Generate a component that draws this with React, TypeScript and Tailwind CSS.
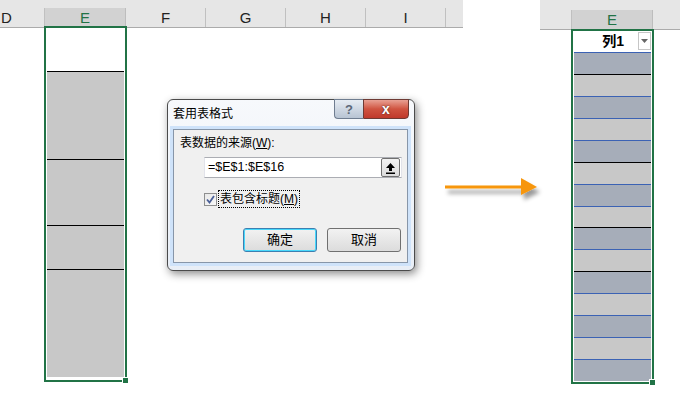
const leftCols = ["F", "G", "H", "I"];

// 左表：单元格高度（含上边框）
const leftCells = [
  { h: "h-[43px]", fill: "bg-white", line: "" },
  { h: "h-[88px]", fill: "bg-[#c8c8c8]", line: "border-t border-black" },
  { h: "h-[66px]", fill: "bg-[#c8c8c8]", line: "border-t border-black" },
  { h: "h-[44px]", fill: "bg-[#c8c8c8]", line: "border-t border-black" },
  { h: "h-[108px]", fill: "bg-[#c8c8c8]", line: "border-t border-black" },
];

const blackRows = [1, 5, 8, 10];

function FillHandle() {
  return (
    <div className="absolute -right-[4px] -bottom-[4px] w-[7px] h-[7px] bg-[#217346] border border-white" />
  );
}

function LeftSheet() {
  return (
    <div className="w-[463px] flex flex-col shrink-0">
      {/* 列标题 */}
      <div className="h-[28px] bg-[#e6e6e6] flex flex-col">
        <div className="h-[8px]" />
        <div className="h-[20px] flex border-b border-[#ababab] text-[15px] text-[#222] leading-[19px]">
          <div className="w-[45px] pl-[1px] border-r border-[#c0c0c0]">D</div>
          <div className="w-[81px] bg-[#d2d2d2] text-center text-[#217346] border-r border-[#bdbdbd]">E</div>
          {leftCols.map((c) => (
            <div key={c} className="w-[80px] text-center border-r border-[#c0c0c0]">
              {c}
            </div>
          ))}
          <div className="flex-1" />
        </div>
      </div>

      {/* 选中列 */}
      <div className="pl-[44px] -mt-[2px]">
        <div className="relative w-[83px] h-[356px] border-2 border-[#217346] px-[1px] pb-[1px] flex flex-col">
          {leftCells.map((c, i) => (
            <div key={i} className={`${c.h} ${c.fill} ${c.line} box-border`} />
          ))}
          <FillHandle />
        </div>
      </div>
    </div>
  );
}

function RightSheet() {
  const rows = Array.from({ length: 15 }, (_, i) => i);
  return (
    <div className="w-[140px] ml-[77px] flex flex-col shrink-0">
      <div className="h-[30px] bg-[#e6e6e6] flex flex-col">
        <div className="h-[10px]" />
        <div className="h-[20px] flex border-b border-[#ababab] text-[15px] leading-[19px]">
          <div className="w-[32px] border-r border-[#c0c0c0]" />
          <div className="w-[81px] bg-[#d2d2d2] text-center text-[#217346] border-r border-[#bdbdbd]">E</div>
          <div className="flex-1" />
        </div>
      </div>

      <div className="pl-[31px] -mt-[1px]">
        <div className="relative w-[83px] h-[355px] border-2 border-[#217346] px-[1px] pb-[1px] flex flex-col bg-white">
          <div className="h-[21px] flex items-center justify-end gap-[14px]">
            <span className="text-[14px] font-bold text-black leading-none">列1</span>
            <div className="w-[13px] h-[18px] border border-[#c6c6c6] bg-white flex items-center justify-center">
              <svg width="7" height="4" viewBox="0 0 7 4">
                <path d="M0 0 L7 0 L3.5 4 Z" fill="#666" />
              </svg>
            </div>
          </div>
          {rows.map((i) => (
            <div
              key={i}
              className={`h-[22px] last:h-[21px] box-border border-t ${
                blackRows.includes(i) ? "border-black" : "border-[#3b62b4]"
              } ${i % 2 === 0 ? "bg-[#a6adb9]" : "bg-[#c8c8c8]"}`}
            />
          ))}
          <FillHandle />
        </div>
      </div>
    </div>
  );
}

function Dialog() {
  return (
    <div className="absolute left-[167px] top-[99px] w-[248px] h-[172px] rounded-[6px] border border-[#4b4b4b] bg-gradient-to-b from-[#f7f9fc] to-[#e8eef6] shadow-[2px_3px_8px_rgba(0,0,0,0.45)] flex flex-col">
      {/* 标题栏 */}
      <div className="h-[29px] flex items-start justify-between">
        <span className="mt-[6px] ml-[5px] text-[12px] leading-[16px] text-black">套用表格式</span>
        <div className="flex mr-[5px] -mt-[1px]">
          <div className="w-[29px] h-[20px] rounded-bl-[4px] border border-[#6f7d90] border-r-0 bg-gradient-to-b from-[#e6ecf3] to-[#b8c4d3] flex items-center justify-center text-[13px] font-bold text-[#5c6878] leading-none">
            ?
          </div>
          <div className="w-[46px] h-[20px] rounded-br-[4px] border border-[#6e3a33] bg-gradient-to-b from-[#e8a093] via-[#cf5340] to-[#c0392b] flex items-center justify-center text-[14px] font-bold text-white leading-none [text-shadow:0_0_2px_#3a1a14]">
            x
          </div>
        </div>
      </div>

      {/* 内容面板 */}
      <div className="ml-[5px] mr-[6px] mb-[7px] flex-1 border border-[#8796a9] ring-[3px] ring-[#cfe3fa] bg-[#f0f0f0] flex flex-col text-[12px] text-black">
        <div className="mt-[5px] ml-[6px] h-[16px] leading-[16px]">
          表数据的来源(<span className="underline">W</span>):
        </div>
        <div className="relative mt-[6px] ml-[30px] w-[198px] h-[21px] bg-white border border-[#abadb3] border-l-[#e2e3ea] border-r-[#e2e3ea] flex items-center pl-[3px] text-[12.5px]">
          =$E$1:$E$16
          <div className="absolute right-[1px] top-0 w-[19px] h-[19px] rounded-[2px] border border-[#707070] bg-gradient-to-b from-[#f2f2f2] to-[#dcdcdc] flex items-center justify-center">
            <svg width="11" height="12" viewBox="0 0 11 12">
              <path d="M5.5 1 L10 6 L7 6 L7 9 L4 9 L4 6 L1 6 Z" fill="#000" />
              <rect x="1" y="10.5" width="9" height="1.5" fill="#000" />
            </svg>
          </div>
        </div>
        <div className="mt-[12px] ml-[30px] h-[18px] flex items-center">
          <div className="w-[13px] h-[13px] border border-[#8e8f8f] bg-gradient-to-br from-[#e8e8e8] to-[#f8f8f8] flex items-center justify-center">
            <svg width="9" height="9" viewBox="0 0 9 9">
              <path d="M1 4.5 L3.5 7.5 L8 1" stroke="#4a5f97" strokeWidth="1.8" fill="none" />
            </svg>
          </div>
          <div className="ml-[1px] h-[18px] px-[1px] border border-dotted border-black leading-[16px]">
            表包含标题(<span className="underline">M</span>)
          </div>
        </div>
        <div className="mt-[20px] mr-[6px] flex justify-end gap-[10px] text-[13px]">
          <div className="w-[74px] h-[24px] rounded-[3px] border border-[#3c7fb1] shadow-[inset_0_0_0_1px_#48d8fb] bg-gradient-to-b from-[#f2f2f2] to-[#dcdcdc] flex items-center justify-center">
            确定
          </div>
          <div className="w-[74px] h-[24px] rounded-[3px] border border-[#707070] bg-gradient-to-b from-[#f2f2f2] to-[#dcdcdc] flex items-center justify-center">
            取消
          </div>
        </div>
      </div>
    </div>
  );
}

function Arrow() {
  return (
    <svg className="absolute left-[440px] top-[172px]" width="108" height="36" viewBox="0 0 108 36">
      <defs>
        <filter id="sh" x="-20%" y="-50%" width="140%" height="200%">
          <feDropShadow dx="3" dy="5" stdDeviation="2" floodColor="#000" floodOpacity="0.4" />
        </filter>
      </defs>
      <g filter="url(#sh)">
        <rect x="5" y="13.5" width="78" height="3" fill="#f7960a" />
        <path d="M81 6 L97 15 L81 23 Z" fill="#f7960a" />
      </g>
    </svg>
  );
}

export default function App() {
  return (
    <div
      className="relative w-[680px] h-[403px] bg-white overflow-hidden flex"
      style={{ fontFamily: '"Liberation Sans", "Noto Sans CJK SC", sans-serif' }}
    >
      <LeftSheet />
      <RightSheet />
      <Arrow />
      <Dialog />
    </div>
  );
}
